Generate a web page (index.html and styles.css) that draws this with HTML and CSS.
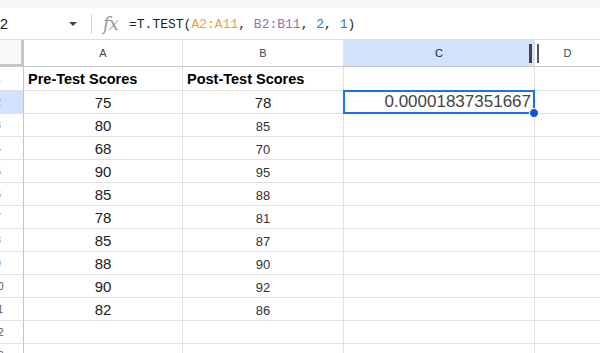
FILE: index.html
```html
<!DOCTYPE html>
<html lang="en">
<head>
    <meta charset="UTF-8">
    <title>T.TEST - Sheet</title>
    <link rel="stylesheet" href="styles.css">
</head>
<body>

<div class="toolbar-edge"></div>

<div class="formula-bar">
    <div class="name-box"><span>C2</span></div>
    <div class="name-arrow"></div>
    <div class="divider"></div>
    <div class="fx">fx</div>
    <div class="formula">=T.TEST(<span class="ref-a">A2:A11</span>, <span class="ref-b">B2:B11</span>, <span class="num">2</span>, <span class="num">1</span>)</div>
</div>

<div class="grid" id="grid"></div>

<script>
    const rows = [
        [75, 78], [80, 85], [68, 70], [90, 95], [85, 88],
        [78, 81], [85, 87], [88, 90], [90, 92], [82, 86]
    ];

    function rowHead(n, active) {
        return `<div class="cell row-head${active ? ' active' : ''}"><span>${n}</span></div>`;
    }

    function buildGrid() {
        const grid = document.getElementById("grid");
        let html = `
            <div class="cell corner"></div>
            <div class="cell col-head">A</div>
            <div class="cell col-head">B</div>
            <div class="cell col-head active">C<i class="resize"></i></div>
            <div class="cell col-head last">D</div>
        `;

        html += rowHead(1) + `
            <div class="cell title">Pre-Test Scores</div>
            <div class="cell title">Post-Test Scores</div>
            <div class="cell"></div>
            <div class="cell last"></div>
        `;

        rows.forEach((r, i) => {
            const first = i === 0;
            html += rowHead(i + 2, first) + `
                <div class="cell val">${r[0]}</div>
                <div class="cell val ${first ? '' : 'small'}">${r[1]}</div>
                ${first ? '<div class="cell result">0.00001837351667<i class="handle"></i></div>' : '<div class="cell"></div>'}
                <div class="cell last"></div>
            `;
        });

        [12, 13].forEach(n => {
            html += rowHead(n) + `
                <div class="cell"></div>
                <div class="cell"></div>
                <div class="cell"></div>
                <div class="cell last"></div>
            `;
        });

        grid.innerHTML = html;
    }

    buildGrid();
</script>

</body>
</html>
```

FILE: styles.css
```css
body { margin: 0; background: #fff; font-family: "Liberation Sans", Arial, sans-serif; color: #1f1f1f; overflow: hidden; }

.toolbar-edge { height: 8px; background: #f4f6fa; }

.formula-bar { height: 31px; display: flex; align-items: center; border-bottom: 1px solid #dadce0; }
.name-box { width: 8px; display: flex; justify-content: flex-end; overflow: hidden; font-size: 15px; }
.name-box span { flex: none; }
.name-arrow { margin-left: 61px; width: 0; height: 0; border-left: 4px solid transparent; border-right: 4px solid transparent; border-top: 4px solid #444; }
.divider { margin-left: 14px; width: 1px; height: 20px; background: #d0d0d0; }
.fx { margin-left: 11px; width: 20px; font-family: "DejaVu Serif", serif; font-style: italic; font-size: 18px; color: #9a9a9a; letter-spacing: -1px; }
.formula { margin-left: 6px; padding-top: 2px; font-family: "Liberation Mono", monospace; font-size: 13px; color: #1f1f1f; }
.ref-a { color: #e8a33c; }
.ref-b { color: #9c6fb6; }
.num { color: #3d74c5; }

.grid { display: grid; grid-template-columns: 24px 159px 161px 191px 1fr; grid-template-rows: 27px 24px repeat(12, 23px); }
.cell { box-sizing: border-box; border-right: 1px solid #e1e1e1; border-bottom: 1px solid #e1e1e1; position: relative; display: flex; align-items: flex-end; padding: 0 3px 2px; white-space: nowrap; }
.cell.last { border-right: none; }

.corner { background: #f8f9fa; border-right: 3px solid #c4c7c5; border-bottom: 3px solid #c4c7c5; }
.col-head { justify-content: center; align-items: center; padding: 0; font-size: 11px; color: #444; border-bottom-color: #c4c7c5; }
.col-head.active { background: #d3e3fd; color: #0b1f44; }
.resize { position: absolute; right: 2px; top: 4px; width: 3px; height: 19px; background: #444; }
.resize::after { content: ""; position: absolute; left: 8px; top: 0; width: 2px; height: 19px; background: #555; }

.row-head { padding: 0; justify-content: flex-end; align-items: center; overflow: hidden; font-size: 10px; color: #555; border-right-color: #c4c7c5; }
.row-head span { flex: none; width: 50px; text-align: center; }
.row-head.active { background: #d3e3fd; color: #0b57d0; }

.title { font-weight: bold; font-size: 14.5px; color: #000; padding-left: 4px; padding-bottom: 3px; }
.val { justify-content: center; font-size: 15px; color: #222; }
.val.small { font-size: 13px; color: #333; }

.result { justify-content: flex-end; font-size: 17px; color: #444; padding-bottom: 1px; }
.result::before { content: ""; position: absolute; left: -1px; top: -1px; right: -1px; bottom: -1px; border: 2px solid #1a73e8; }
.handle { position: absolute; right: -5px; bottom: -5px; width: 8px; height: 8px; border-radius: 50%; background: #0b57d0; border: 1px solid #fff; z-index: 1; }
```
